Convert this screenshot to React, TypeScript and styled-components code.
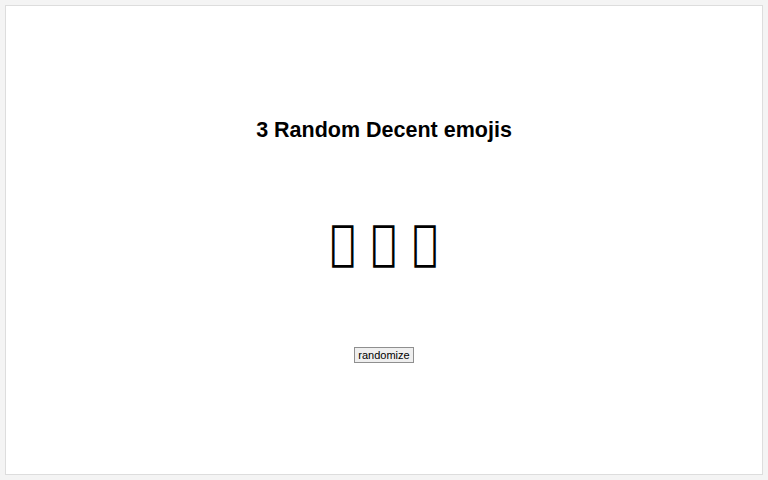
import { useState } from "react";
import styled, { createGlobalStyle } from "styled-components";

const GlobalStyle = createGlobalStyle`
  html, body {
    margin: 0;
    padding: 0;
    background-color: #f4f4f4;
    font-family: "Liberation Sans", Arial, sans-serif;
  }
`;

const StyledCard = styled.div`
  margin: 5px;
  height: 470px;
  background-color: white;
  border: 1px solid #dddddd;
  display: flex;
  flex-direction: column;
  align-items: center;
  padding-top: 112px;
  box-sizing: border-box;
`;

const StyledTitle = styled.h2`
  margin: 0;
  font-size: 21.5px;
  font-weight: bold;
  line-height: 25px;
  color: black;
`;

const StyledEmojis = styled.div`
  margin-top: 67px;
  font-family: "DejaVu Sans Condensed", "DejaVu Sans", sans-serif;
  font-size: 48px;
  line-height: 64px;
  word-spacing: 1.5px;
  color: black;
`;

const StyledButton = styled.button`
  margin-top: 73px;
  padding: 1px 3px;
  font-family: "Liberation Sans", Arial, sans-serif;
  font-size: 11px;
  line-height: 12px;
  color: black;
  background-color: #efefef;
  border: 1px solid #8f8f8f;
  border-radius: 0;
`;

// codepoints with no glyph anywhere, so they come out as missing-glyph boxes
const EMOJIS = ["\u{F0001}", "\u{F0002}", "\u{F0003}", "\u{F0004}", "\u{F0005}", "\u{F0006}"];

const pickThree = () => {
  const result: string[] = [];
  for (let i = 0; i < 3; i++) {
    result.push(EMOJIS[Math.floor(Math.random() * EMOJIS.length)]);
  }
  return result;
};

function App() {
  const [emojis, setEmojis] = useState(EMOJIS.slice(0, 3));

  return (
    <>
      <GlobalStyle />
      <StyledCard>
        <StyledTitle>3 Random Decent emojis</StyledTitle>
        <StyledEmojis>{emojis.join(" ")}</StyledEmojis>
        <StyledButton onClick={() => setEmojis(pickThree())}>randomize</StyledButton>
      </StyledCard>
    </>
  );
}

export default App;
